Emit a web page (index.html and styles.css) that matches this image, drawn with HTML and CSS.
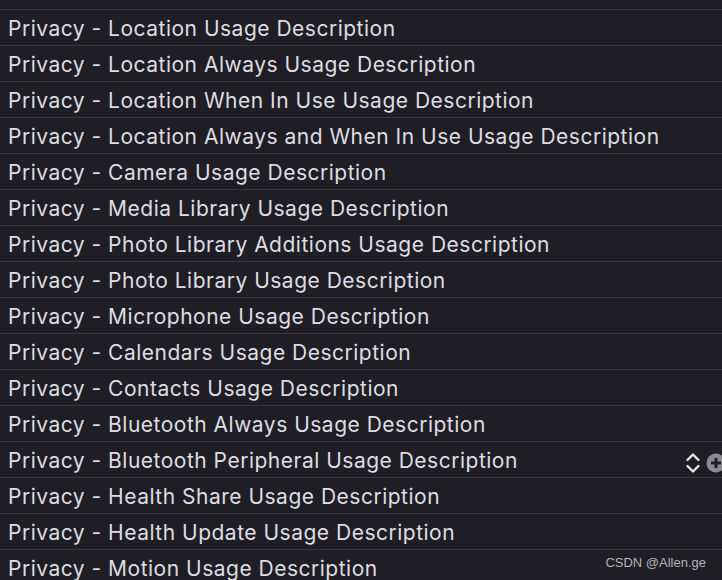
FILE: index.html
```html
<!DOCTYPE html>
<html>
<head>
<meta charset="utf-8">
<link rel="stylesheet" href="styles.css">
</head>
<body>
<div class="list">
  <div class="row row-cut"><span class="key">Privacy - Desktop Folder Usage Description</span></div>
  <div class="row"><span class="key">Privacy - Location Usage Description</span></div>
  <div class="row"><span class="key">Privacy - Location Always Usage Description</span></div>
  <div class="row"><span class="key">Privacy - Location When In Use Usage Description</span></div>
  <div class="row"><span class="key">Privacy - Location Always and When In Use Usage Description</span></div>
  <div class="row"><span class="key">Privacy - Camera Usage Description</span></div>
  <div class="row"><span class="key">Privacy - Media Library Usage Description</span></div>
  <div class="row"><span class="key">Privacy - Photo Library Additions Usage Description</span></div>
  <div class="row"><span class="key">Privacy - Photo Library Usage Description</span></div>
  <div class="row"><span class="key">Privacy - Microphone Usage Description</span></div>
  <div class="row"><span class="key">Privacy - Calendars Usage Description</span></div>
  <div class="row"><span class="key">Privacy - Contacts Usage Description</span></div>
  <div class="row"><span class="key">Privacy - Bluetooth Always Usage Description</span></div>
  <div class="row"><span class="key">Privacy - Bluetooth Peripheral Usage Description</span>
    <span class="controls">
      <svg class="stepper" width="16" height="24" viewBox="0 0 16 24"><path d="M2.5 9 L8 3.5 L13.5 9 M2.5 15 L8 20.5 L13.5 15" fill="none" stroke="#e6e6e8" stroke-width="2.4" stroke-linecap="round" stroke-linejoin="round"/></svg>
      <svg class="plus" width="20" height="20" viewBox="0 0 20 20"><circle cx="10" cy="10" r="9.5" fill="#8c8b90"/><path d="M10 5 V15 M5 10 H15" stroke="#1f1e25" stroke-width="3"/></svg>
    </span>
  </div>
  <div class="row"><span class="key">Privacy - Health Share Usage Description</span></div>
  <div class="row"><span class="key">Privacy - Health Update Usage Description</span></div>
  <div class="row"><span class="key">Privacy - Motion Usage Description</span></div>
</div>
<div class="watermark">CSDN @Allen.ge</div>
</body>
</html>
```
FILE: styles.css
```css
html, body {
  margin: 0;
  padding: 0;
  background: #1f1e25;
  width: 722px;
  height: 580px;
  overflow: hidden;
}
.list {
  margin-top: -26px;
  display: flex;
  flex-direction: column;
}
.row {
  height: 35px;
  border-bottom: 1px solid #38373e;
  display: flex;
  align-items: center;
  padding-left: 8px;
  font-family: Inter, "Noto Sans", sans-serif;
  font-size: 21px;
  letter-spacing: 0.5px;
  color: #dedde2;
  white-space: nowrap;
  position: relative;
}
.key {
  flex: 0 0 auto;
  padding-top: 1px;
}
.row-cut {
  overflow: hidden;
}
.row-cut .key {
  margin-top: -17px;
}
.controls {
  margin-left: auto;
  display: flex;
  align-items: center;
  gap: 5px;
  margin-right: -4px;
  padding-top: 6px;
}
.stepper { display: block; }
.plus { display: block; }
.watermark {
  position: absolute;
  right: 16px;
  bottom: 10px;
  font-family: "Liberation Sans", Arial, sans-serif;
  font-size: 13px;
  color: #b4b3b8;
}
```
